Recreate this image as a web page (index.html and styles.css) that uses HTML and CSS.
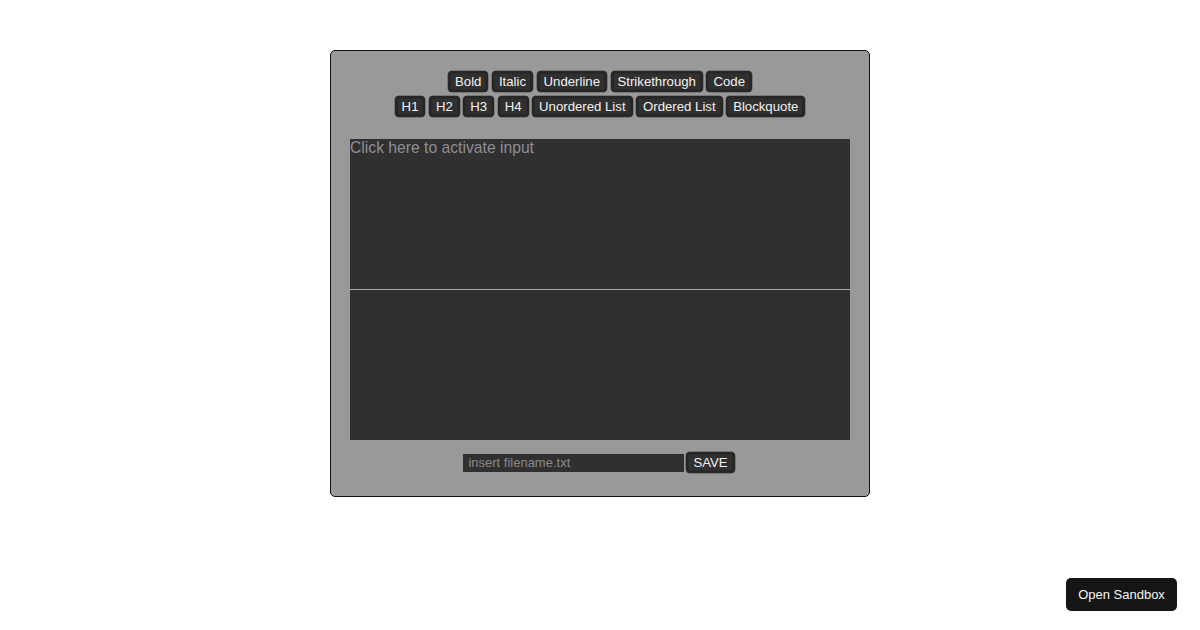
FILE: index.html
```html
<!DOCTYPE html>
<html>
<head>
<meta charset="utf-8">
<link rel="stylesheet" href="styles.css">
</head>
<body>
<div class="app">
  <div class="toolbar">
    <div class="row">
      <button class="btn">Bold</button>
      <button class="btn">Italic</button>
      <button class="btn">Underline</button>
      <button class="btn">Strikethrough</button>
      <button class="btn">Code</button>
    </div>
    <div class="row">
      <button class="btn">H1</button>
      <button class="btn">H2</button>
      <button class="btn">H3</button>
      <button class="btn">H4</button>
      <button class="btn">Unordered List</button>
      <button class="btn">Ordered List</button>
      <button class="btn">Blockquote</button>
    </div>
  </div>
  <div class="editor">
    <div class="pane input-pane"><span class="placeholder">Click here to activate input</span></div>
    <div class="divider"></div>
    <div class="pane output-pane"></div>
  </div>
  <div class="savebar">
    <input class="filename" type="text" placeholder="insert filename.txt">
    <button class="btn save">SAVE</button>
  </div>
</div>
<a class="sandbox">Open Sandbox</a>
</body>
</html>
```
FILE: styles.css
```css
html, body {
  margin: 0;
  padding: 0;
  background: #ffffff;
  font-family: "Liberation Sans", Arial, sans-serif;
}

.app {
  box-sizing: border-box;
  width: 540px;
  margin: 50px auto 0;
  padding: 20px 19px 23px 19px;
  background: #999999;
  border: 1px solid #111111;
  border-radius: 5px;
}

.toolbar {
  display: flex;
  flex-direction: column;
  align-items: center;
  gap: 4px;
}

.row {
  display: flex;
  justify-content: center;
  gap: 3.5px;
}

.btn {
  box-sizing: border-box;
  height: 21px;
  padding: 0 5px;
  margin: 0;
  background: #303030;
  color: #f2f2f2;
  border: 2px solid #262626;
  border-radius: 4px;
  box-shadow: inset 0 0 0 1px #2a2a2a, 0 0 0 0.5px #555;
  font-family: "Liberation Sans", Arial, sans-serif;
  font-size: 13.2px;
  line-height: 16px;
  cursor: pointer;
}

.editor {
  margin-top: 22px;
  width: 500px;
  background: #303030;
}

.pane {
  height: 150px;
  background: #303030;
}

.placeholder {
  display: block;
  color: #8e8e96;
  font-size: 15.7px;
  line-height: 18px;
}

.divider {
  height: 1px;
  background: #a6a6a6;
}

.savebar {
  display: flex;
  justify-content: center;
  align-items: center;
  gap: 2px;
  margin-top: 12px;
  margin-left: -2px;
}

.filename {
  box-sizing: border-box;
  width: 221px;
  height: 18px;
  padding: 0 5px;
  margin: 0;
  border: none;
  outline: none;
  background: #303030;
  color: #dddddd;
  font-family: "Liberation Sans", Arial, sans-serif;
  font-size: 13px;
}

.filename::placeholder {
  color: #8a8a8a;
}

.save {
  padding: 0 5px;
}

.sandbox {
  position: fixed;
  right: 23px;
  bottom: 19px;
  box-sizing: border-box;
  width: 111px;
  height: 33px;
  display: flex;
  align-items: center;
  justify-content: center;
  background: #151515;
  color: #f5f5f5;
  border-radius: 5px;
  font-family: "Liberation Sans", Arial, sans-serif;
  font-size: 13px;
}
```
